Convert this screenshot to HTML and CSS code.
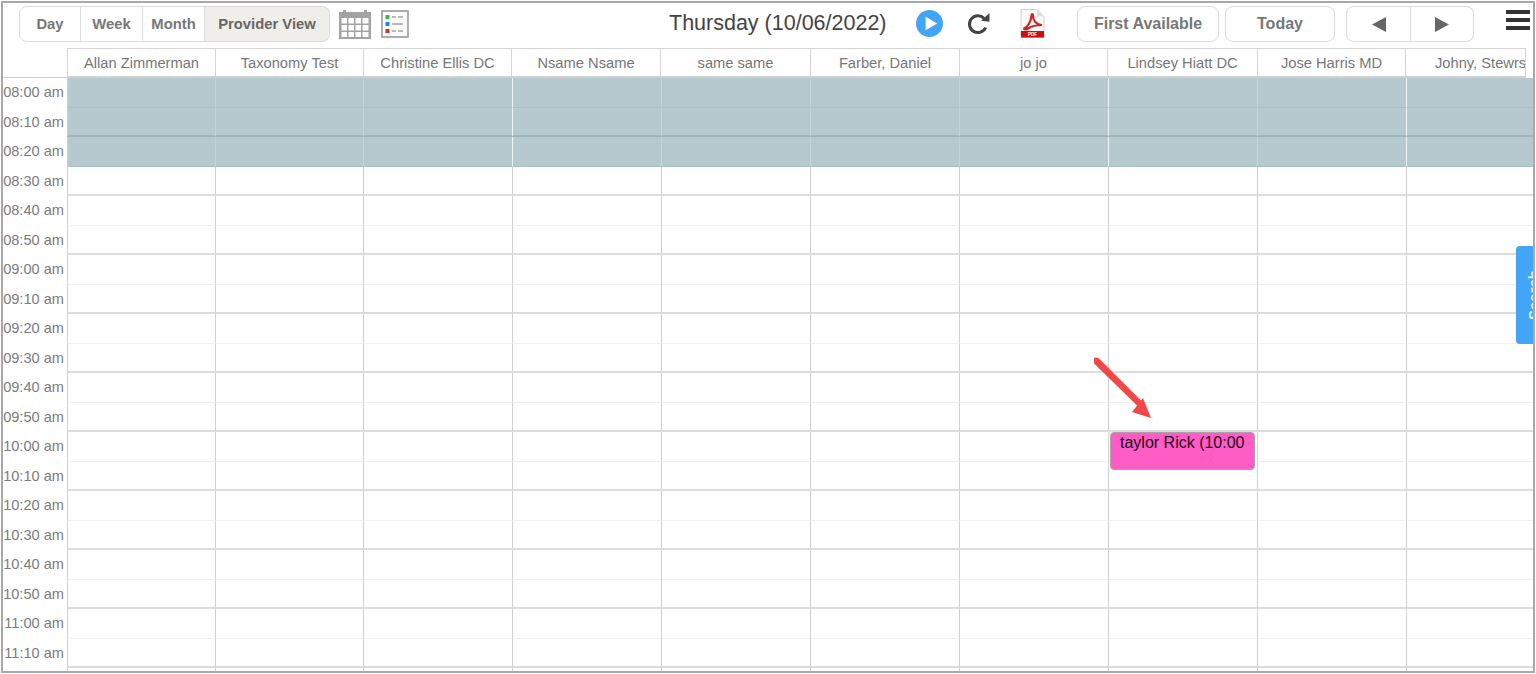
FILE: index.html
```html
<!DOCTYPE html>
<html lang="en">
<head>
<meta charset="utf-8">
<title>Provider View</title>
<link rel="stylesheet" href="styles.css">
</head>
<body>
<div class="frame">
  <div class="toolbar">
    <div class="btn-group views">
      <button class="btn day">Day</button>
      <button class="btn week">Week</button>
      <button class="btn month">Month</button>
      <button class="btn provider active">Provider View</button>
    </div>
    <svg class="icon cal" viewBox="0 0 32 29" width="32" height="29">
      <path d="M0 2h4V0h3v2h18V0h3v2h4v27H0z" fill="#a3a3a3"/>
      <g fill="#fff">
        <rect x="2.5" y="8" width="5.5" height="5.5"/><rect x="9.5" y="8" width="5.5" height="5.5"/><rect x="16.5" y="8" width="5.5" height="5.5"/><rect x="23.5" y="8" width="6" height="5.5"/>
        <rect x="2.5" y="15" width="5.5" height="5.5"/><rect x="9.5" y="15" width="5.5" height="5.5"/><rect x="16.5" y="15" width="5.5" height="5.5"/><rect x="23.5" y="15" width="6" height="5.5"/>
        <rect x="2.5" y="22" width="5.5" height="5"/><rect x="9.5" y="22" width="5.5" height="5"/><rect x="16.5" y="22" width="5.5" height="5"/><rect x="23.5" y="22" width="6" height="5"/>
      </g>
    </svg>
    <svg class="icon list" viewBox="0 0 28 28" width="28" height="28">
      <rect x="1" y="1" width="26" height="26" fill="#fbfbfb" stroke="#9a9a9a" stroke-width="1.6"/>
      <rect x="4.5" y="5" width="4" height="4" fill="#4caf50"/>
      <rect x="4.5" y="12" width="4" height="4" fill="#1e88e5"/>
      <rect x="4.5" y="19" width="4" height="4" fill="#d32f2f"/>
      <path d="M11 7h4M17 7h5M11 14h11M11 21h4M17 21h5" stroke="#777" stroke-width="1.2" fill="none"/>
    </svg>
    <div class="title">Thursday (10/06/2022)</div>
    <svg class="icon play" viewBox="0 0 28 28" width="27" height="27">
      <circle cx="14" cy="14" r="14" fill="#42a5f5"/>
      <path d="M10 7l12 7-12 7z" fill="#fff"/>
    </svg>
    <svg class="icon reload" viewBox="0 0 23 24" width="23" height="24">
      <path d="M18.6 15.5A8.4 8.4 0 1 1 17 6.4" fill="none" stroke="#444" stroke-width="3"/>
      <path d="M14 8.8L22.5 9.8V1z" fill="#444"/>
    </svg>
    <svg class="icon pdf" viewBox="0 0 25 29" width="25" height="29">
      <path d="M1 .5h16l7 7V28.500H1z" fill="#fafafa" stroke="#cfcfcf"/>
      <path d="M17 .5v7h7z" fill="#ddd"/>
      <path d="M4 19.500c3-1 7-6 7.500-13 .2-2 1.500-2 1.500 0 0 5 3 9 9 9.500-5 0-11 1.500-14 3.500-2 1.500-4 1-4 0z" fill="none" stroke="#d81e1e" stroke-width="2.200"/>
      <rect x="1" y="22" width="23" height="6.500" fill="#cc0f0f"/>
      <text class="pdf-label" x="12.500" y="27.300">PDF</text>
    </svg>
    <button class="btn solo first">First Available</button>
    <button class="btn solo today">Today</button>
    <div class="btn-group nav">
      <button class="btn prev"><svg viewBox="0 0 14 15" width="14" height="15"><path d="M14 0v15L0 7.500z" fill="#666"/></svg></button>
      <button class="btn next"><svg viewBox="0 0 14 15" width="14" height="15"><path d="M0 0v15l14-7.500z" fill="#666"/></svg></button>
    </div>
    <div class="menu"><span></span><span></span><span></span></div>
  </div>

  <div class="head">
    <div class="corner"></div>
    <div class="hcell">Allan Zimmerman</div>
    <div class="hcell">Taxonomy Test</div>
    <div class="hcell">Christine Ellis DC</div>
    <div class="hcell">Nsame Nsame</div>
    <div class="hcell">same same</div>
    <div class="hcell">Farber, Daniel</div>
    <div class="hcell">jo jo</div>
    <div class="hcell">Lindsey Hiatt DC</div>
    <div class="hcell">Jose Harris MD</div>
    <div class="hcell last">Johny, Stewrs</div>
  </div>

  <div class="rows">
    <div class="row blocked"><div class="time">08:00 am</div><div class="cell"></div><div class="cell"></div><div class="cell"></div><div class="cell w"></div><div class="cell"></div><div class="cell"></div><div class="cell"></div><div class="cell w"></div><div class="cell"></div><div class="cell w"></div></div>
    <div class="row blocked even"><div class="time">08:10 am</div><div class="cell"></div><div class="cell"></div><div class="cell"></div><div class="cell w"></div><div class="cell"></div><div class="cell"></div><div class="cell"></div><div class="cell w"></div><div class="cell"></div><div class="cell w"></div></div>
    <div class="row blocked"><div class="time">08:20 am</div><div class="cell"></div><div class="cell"></div><div class="cell"></div><div class="cell w"></div><div class="cell"></div><div class="cell"></div><div class="cell"></div><div class="cell w"></div><div class="cell"></div><div class="cell w"></div></div>
    <div class="row even"><div class="time">08:30 am</div><div class="cell"></div><div class="cell"></div><div class="cell"></div><div class="cell"></div><div class="cell"></div><div class="cell"></div><div class="cell"></div><div class="cell"></div><div class="cell"></div><div class="cell"></div></div>
    <div class="row"><div class="time">08:40 am</div><div class="cell"></div><div class="cell"></div><div class="cell"></div><div class="cell"></div><div class="cell"></div><div class="cell"></div><div class="cell"></div><div class="cell"></div><div class="cell"></div><div class="cell"></div></div>
    <div class="row even"><div class="time">08:50 am</div><div class="cell"></div><div class="cell"></div><div class="cell"></div><div class="cell"></div><div class="cell"></div><div class="cell"></div><div class="cell"></div><div class="cell"></div><div class="cell"></div><div class="cell"></div></div>
    <div class="row"><div class="time">09:00 am</div><div class="cell"></div><div class="cell"></div><div class="cell"></div><div class="cell"></div><div class="cell"></div><div class="cell"></div><div class="cell"></div><div class="cell"></div><div class="cell"></div><div class="cell"></div></div>
    <div class="row even"><div class="time">09:10 am</div><div class="cell"></div><div class="cell"></div><div class="cell"></div><div class="cell"></div><div class="cell"></div><div class="cell"></div><div class="cell"></div><div class="cell"></div><div class="cell"></div><div class="cell"></div></div>
    <div class="row"><div class="time">09:20 am</div><div class="cell"></div><div class="cell"></div><div class="cell"></div><div class="cell"></div><div class="cell"></div><div class="cell"></div><div class="cell"></div><div class="cell"></div><div class="cell"></div><div class="cell"></div></div>
    <div class="row even"><div class="time">09:30 am</div><div class="cell"></div><div class="cell"></div><div class="cell"></div><div class="cell"></div><div class="cell"></div><div class="cell"></div><div class="cell"></div><div class="cell"></div><div class="cell"></div><div class="cell"></div></div>
    <div class="row"><div class="time">09:40 am</div><div class="cell"></div><div class="cell"></div><div class="cell"></div><div class="cell"></div><div class="cell"></div><div class="cell"></div><div class="cell"></div><div class="cell"></div><div class="cell"></div><div class="cell"></div></div>
    <div class="row even"><div class="time">09:50 am</div><div class="cell"></div><div class="cell"></div><div class="cell"></div><div class="cell"></div><div class="cell"></div><div class="cell"></div><div class="cell"></div><div class="cell"></div><div class="cell"></div><div class="cell"></div></div>
    <div class="row"><div class="time">10:00 am</div><div class="cell"></div><div class="cell"></div><div class="cell"></div><div class="cell"></div><div class="cell"></div><div class="cell"></div><div class="cell"></div><div class="cell"><div class="event">taylor Rick (10:00</div></div><div class="cell"></div><div class="cell"></div></div>
    <div class="row even"><div class="time">10:10 am</div><div class="cell"></div><div class="cell"></div><div class="cell"></div><div class="cell"></div><div class="cell"></div><div class="cell"></div><div class="cell"></div><div class="cell"></div><div class="cell"></div><div class="cell"></div></div>
    <div class="row"><div class="time">10:20 am</div><div class="cell"></div><div class="cell"></div><div class="cell"></div><div class="cell"></div><div class="cell"></div><div class="cell"></div><div class="cell"></div><div class="cell"></div><div class="cell"></div><div class="cell"></div></div>
    <div class="row even"><div class="time">10:30 am</div><div class="cell"></div><div class="cell"></div><div class="cell"></div><div class="cell"></div><div class="cell"></div><div class="cell"></div><div class="cell"></div><div class="cell"></div><div class="cell"></div><div class="cell"></div></div>
    <div class="row"><div class="time">10:40 am</div><div class="cell"></div><div class="cell"></div><div class="cell"></div><div class="cell"></div><div class="cell"></div><div class="cell"></div><div class="cell"></div><div class="cell"></div><div class="cell"></div><div class="cell"></div></div>
    <div class="row even"><div class="time">10:50 am</div><div class="cell"></div><div class="cell"></div><div class="cell"></div><div class="cell"></div><div class="cell"></div><div class="cell"></div><div class="cell"></div><div class="cell"></div><div class="cell"></div><div class="cell"></div></div>
    <div class="row"><div class="time">11:00 am</div><div class="cell"></div><div class="cell"></div><div class="cell"></div><div class="cell"></div><div class="cell"></div><div class="cell"></div><div class="cell"></div><div class="cell"></div><div class="cell"></div><div class="cell"></div></div>
    <div class="row even"><div class="time">11:10 am</div><div class="cell"></div><div class="cell"></div><div class="cell"></div><div class="cell"></div><div class="cell"></div><div class="cell"></div><div class="cell"></div><div class="cell"></div><div class="cell"></div><div class="cell"></div></div>
    <div class="row"><div class="time"></div><div class="cell"></div><div class="cell"></div><div class="cell"></div><div class="cell"></div><div class="cell"></div><div class="cell"></div><div class="cell"></div><div class="cell"></div><div class="cell"></div><div class="cell"></div></div>
  </div>

  <svg class="callout" viewBox="0 0 64 66" width="64" height="66">
    <path d="M3 2.500L3 7 46 49 49 46 6 3z" fill="#f04848" stroke="#f04848" stroke-width="2" stroke-linejoin="round"/>
    <path d="M40 56L51 42 59 62z" fill="#f04848"/>
  </svg>
  <div class="search-tab"><span>Search</span></div>
</div>
</body>
</html>
```

FILE: styles.css
```css
* { box-sizing: border-box; }
html, body { margin: 0; padding: 0; background: #fff; }
body { font-family: "Liberation Sans", Arial, sans-serif; font-size: 14.7px; color: #777; overflow: hidden; }

.frame {
  position: relative;
  width: 1534px;
  height: 672px;
  margin: 1px 0 0 1px;
  border: 2px solid #a8a8a8;
  overflow: hidden;
  background: #fff;
}

/* toolbar */
.toolbar { display: flex; align-items: center; height: 45px; padding: 0 0 3px 16px; }
.btn {
  font: bold 14.8px "Liberation Sans", Arial, sans-serif;
  color: #777;
  background: #fff;
  border: 1px solid #ddd;
  height: 36px;
  padding: 0;
  display: flex;
  align-items: center;
  justify-content: center;
}
.btn-group { display: flex; }
.btn-group .btn { border-left: 0; }
.btn-group .btn:first-child { border-left: 1px solid #ddd; border-radius: 8px 0 0 8px; }
.btn-group .btn:last-child { border-radius: 0 8px 8px 0; }
.day { width: 62px; }
.week, .month { width: 62px; }
.provider { width: 125px; }
.active { background: #f0eee8; color: #666; }
.solo { border-radius: 8px; font-size: 16px; }
.first { width: 142px; margin-left: 32px; }
.today { width: 110px; margin-left: 6px; }
.nav { margin-left: 11px; }
.prev { width: 65px; }
.next { width: 63px; }
.icon { flex: none; display: block; }
.cal { margin-left: 9px; }
.list { margin-left: 10px; }
.title { width: 217px; margin: -2px 0 0 260px; font-size: 21.5px; color: #444; white-space: nowrap; }
.play { margin: -2px 0 0 30px; }
.reload { margin: -1px 0 0 24px; }
.pdf { margin: -1px 0 0 30px; }
.pdf-label { font: bold 4.5px "Liberation Sans", Arial, sans-serif; fill: #fff; text-anchor: middle; }
.menu { width: 24px; margin: -8px 0 0 32px; display: flex; flex-direction: column; gap: 4.500px; }
.menu span { display: block; height: 3.500px; background: #333; }

/* header row and time grid */
.head, .row { display: grid; }
.head {
  height: 30px;
  grid-template-columns: 64px 148px 148px 148px 149px 150px 149px 148px 150px 148px 121px;
}
.row {
  height: 29.5px;
  grid-template-columns: 64px 148px 148px 149px 149px 149px 149px 149px 149px 149px 1fr;
}
.corner { border-bottom: 1px solid #ccc; }
.hcell {
  border: 1px solid #d4d4d4;
  border-width: 1px 0 2px 1px;
  border-bottom-color: #d0d0d0;
  line-height: 28px;
  text-align: center;
  white-space: nowrap;
  overflow: hidden;
}
.last { text-align: left; padding-left: 29px; border-right: 1px solid #d4d4d4; }

.rows { height: 597px; overflow: hidden; }
.time {
  line-height: 29px;
  text-align: right;
  padding-right: 3px;
  white-space: nowrap;
  font-size: 14.6px;
  color: #7c7c7c;
}
.cell {
  position: relative;
  border-left: 1px solid #d0d0d0;
  border-bottom: 1px solid #f0f0f0;
}
.even .cell { border-bottom: 2px solid #dcdcdc; }
.blocked .cell { background: #b6c9cf; border-left-color: #c4d3d8; border-bottom-color: #abbfc5; }
.blocked.even .cell { border-bottom-color: #9fb5bc; }
.blocked .cell.w { border-left-color: #eef3f4; }

.event {
  position: absolute;
  z-index: 1;
  left: 1px;
  top: 0;
  width: 145px;
  height: 38px;
  padding: 0 9px;
  background: #ff5cc6;
  border: 1px solid #b0a0ac;
  border-radius: 4px;
  color: #1a0a20;
  font-size: 16px;
  line-height: 19px;
  white-space: nowrap;
}

.callout { position: absolute; z-index: 2; left: 1089px; top: 353px; }

.search-tab {
  position: absolute;
  z-index: 2;
  left: 1513px;
  top: 243px;
  width: 30px;
  height: 98px;
  padding-left: 9px;
  background: #42a5f5;
  border-radius: 4px 0 0 4px;
  color: #e8f4fe;
  display: flex;
  align-items: center;
}
.search-tab span {
  writing-mode: vertical-rl;
  transform: rotate(180deg);
  font-size: 15px;
  font-weight: bold;
  line-height: 18px;
}
```
